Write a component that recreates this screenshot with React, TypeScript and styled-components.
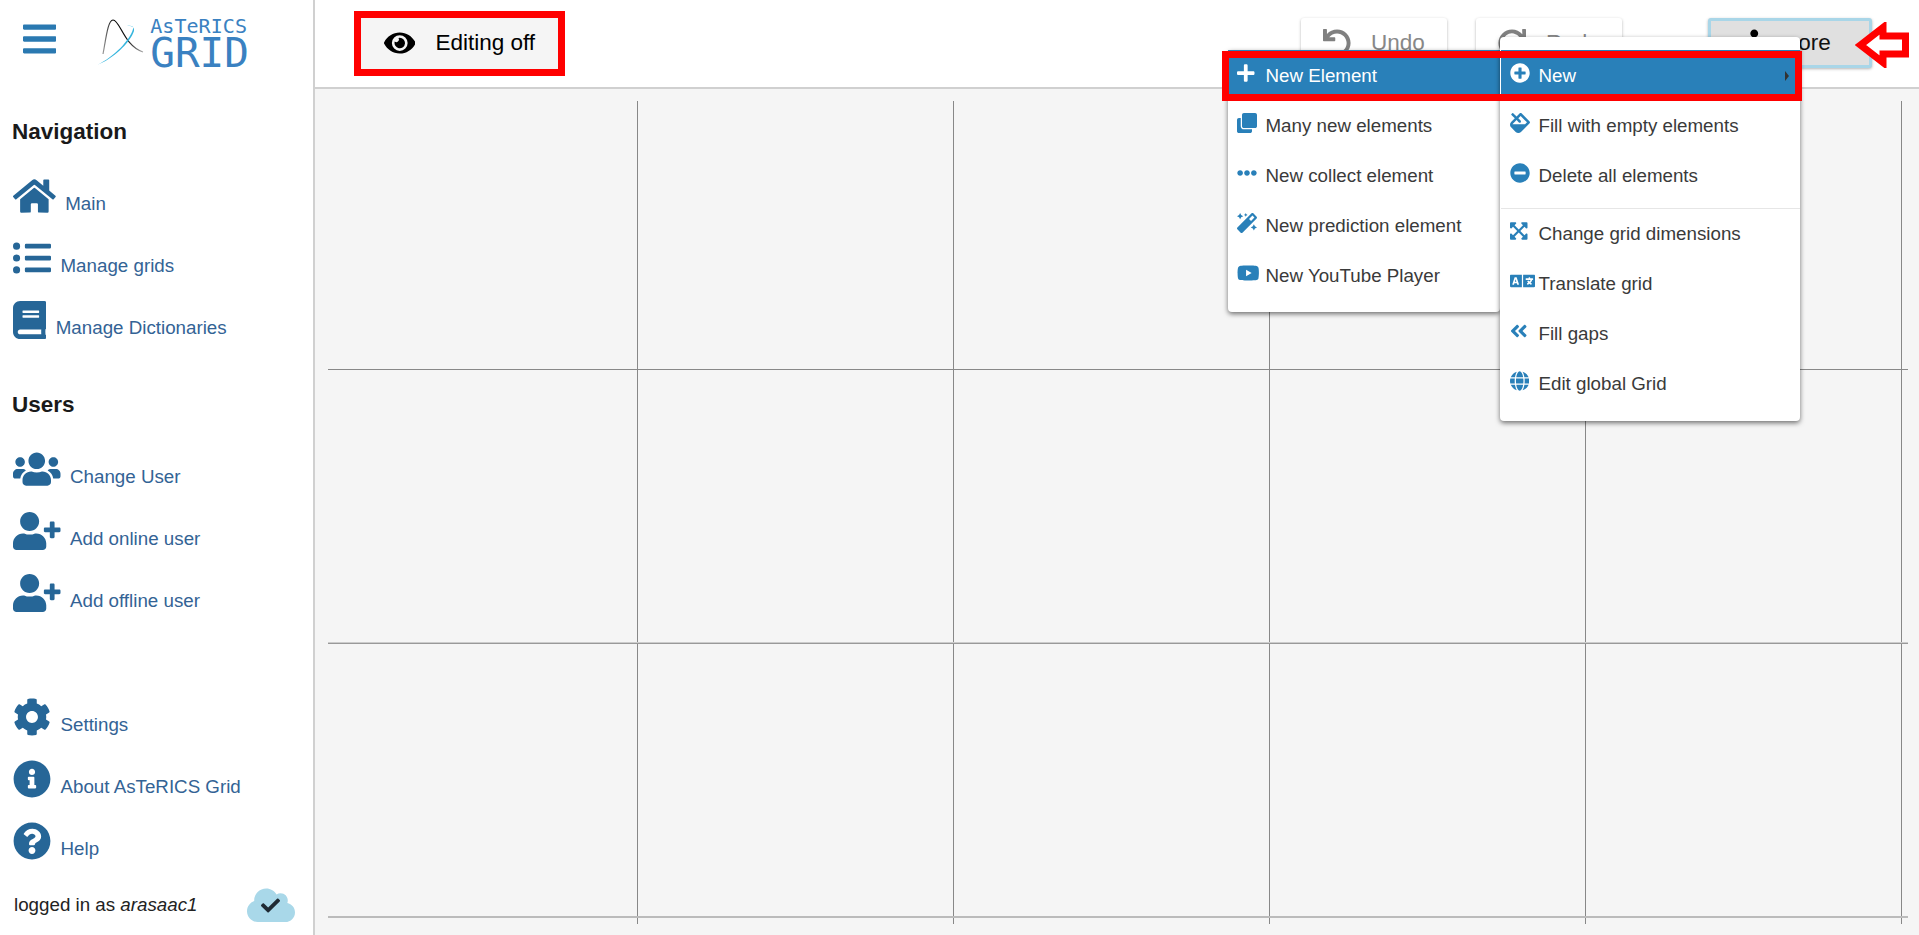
import React from 'react';
import styled, { createGlobalStyle } from 'styled-components';
import {
  FaBars, FaHome, FaListUl, FaBook, FaUsers, FaUserPlus, FaCog, FaInfoCircle, FaQuestionCircle,
  FaCloud, FaCheck, FaEye, FaUndo, FaRedo, FaEllipsisV, FaPlus, FaPlusCircle, FaClone, FaEllipsisH,
  FaMagic, FaYoutube, FaFill, FaMinusCircle, FaExpandArrowsAlt, FaLanguage, FaAngleDoubleLeft, FaGlobe,
} from 'react-icons/fa';

const Global = createGlobalStyle`
  html, body { margin: 0; padding: 0; height: 100%; overflow: hidden; background: #fff; }
  body { font-family: "Liberation Sans", Arial, sans-serif; }
  * { box-sizing: border-box; }
`;

const Page = styled.div`
  display: flex;
  width: 1919px;
  height: 935px;
  position: relative;
  overflow: hidden;
`;

/* An icon of the given height, at the width its Font Awesome artboard asks for. */
const Glyph = styled.span<{ $h: number; $r?: number }>`
  display: block;
  flex: none;
  height: ${(p) => p.$h}px;
  width: ${(p) => p.$h * (p.$r ?? 1)}px;
  svg { display: block; width: 100%; height: 100%; }
`;

const Sidebar = styled.aside`
  width: 315px;
  flex: none;
  display: flex;
  flex-direction: column;
  border-right: 2px solid #d0d0d0;
  background: #fff;
`;

const Brand = styled.div`
  height: 88px;
  display: flex;
  align-items: flex-start;
  padding: 18px 0 0 23px;
  flex: none;
`;

const Burger = styled.div`
  margin: 2px 41px 0 0;
  color: #2a79b1;
`;

const LogoMark = styled.svg`
  width: 50px;
  height: 48px;
  flex: none;
  margin-right: 3px;
`;

const LogoWords = styled.div`
  font-family: "DejaVu Sans Mono", monospace;
  color: #3a81c1;
  display: flex;
  flex-direction: column;
  margin-top: -2.5px;
`;

const LogoTop = styled.span`
  font-size: 20px;
  line-height: 21px;
  letter-spacing: 0.05px;
`;

const LogoBottom = styled.span`
  font-size: 41px;
  line-height: 33px;
`;

const SectionTitle = styled.h2<{ $top: number }>`
  margin: ${(p) => p.$top}px 0 32px 12px;
  font-size: 22.5px;
  line-height: 26px;
  font-weight: 700;
  color: #1a1a1a;
`;

const NavList = styled.nav`
  display: flex;
  flex-direction: column;
  gap: 24.2px;
  padding-left: 13px;
`;

const NavItem = styled.a`
  display: flex;
  align-items: flex-end;
  height: 38px;
  gap: 9.5px;
  color: #336395;
  font-size: 18.75px;
  line-height: 23px;
  svg { color: #266697; }
`;

const BottomNav = styled(NavList)`
  margin-top: auto;
`;

const Footer = styled.div`
  display: flex;
  align-items: center;
  justify-content: space-between;
  padding: 0 18px 8px 14px;
  margin-top: 23px;
  height: 52px;
  font-size: 18.75px;
  color: #222;
  em { font-style: italic; }
`;

const CloudBadge = styled.div`
  position: relative;
  color: #a9d8e9;
`;

const CloudCheck = styled.span`
  position: absolute;
  left: 14px;
  top: 10px;
  color: #1f2a33;
`;

const Main = styled.main`
  flex: 1;
  display: flex;
  flex-direction: column;
  min-width: 0;
`;

const Header = styled.header`
  height: 89px;
  flex: none;
  display: flex;
  align-items: center;
  border-bottom: 2px solid #d0d0d0;
  padding: 0 47px 1px 46px;
  background: #fff;
`;

const ToolButton = styled.button<{ $w: number; $gapLeft: string }>`
  width: ${(p) => p.$w}px;
  height: 50px;
  margin-left: ${(p) => p.$gapLeft};
  display: flex;
  align-items: center;
  justify-content: center;
  gap: 20px;
  border: none;
  border-radius: 3px;
  background: #fff;
  color: #888;
  font-family: inherit;
  font-size: 22.5px;
  padding: 0;
  box-shadow: 0 1px 3px rgba(0, 0, 0, 0.3);
  svg { color: #808080; }
`;

const EditButton = styled(ToolButton)`
  height: 51px;
  background: #f5f5f5;
  color: #000;
  box-shadow: none;
  border-radius: 0;
  outline: 7px solid #f00;
  svg { color: #000; }
`;

const MoreButton = styled(ToolButton)`
  background: #e0e0e0;
  color: #111;
  border: 3px solid #a9d6e8;
  svg { color: #000; }
`;

/* The open menu hides this letter in the picture; its top must not peek out above the menu. */
const CoveredLetter = styled.span`
  color: transparent;
`;

const Canvas = styled.div`
  flex: 1;
  background: #f5f5f5;
  padding: 12px 0 0 13px;
`;

const GridLines = styled.div`
  width: 1580px;
  height: 823px;
  background-image:
    linear-gradient(#ccc, #ccc),
    linear-gradient(#999, #999),
    linear-gradient(#bbb, #bbb),
    linear-gradient(#888, #888),
    linear-gradient(90deg, transparent 315px, #888 315px);
  background-size: 100% 1px, 100% 1px, 100% 2px, 100% 1px, 316px 100%;
  background-position: 0 541px, 0 542px, 0 815px, 0 268px, 310px 0;
  background-repeat: no-repeat, no-repeat, no-repeat, no-repeat, repeat-x;
`;

const Menu = styled.ul<{ $left: number; $top: number; $w: number; $pad: string }>`
  position: absolute;
  left: ${(p) => p.$left}px;
  top: ${(p) => p.$top}px;
  width: ${(p) => p.$w}px;
  padding: ${(p) => p.$pad};
  margin: 0;
  list-style: none;
  background: #fff;
  border-radius: 4px;
  box-shadow: 0 2px 5px rgba(0, 0, 0, 0.55);
`;

const MenuItem = styled.li<{ $active?: boolean; $pad: number }>`
  position: relative;
  height: 50px;
  display: flex;
  align-items: center;
  padding: 2px 0 0 ${(p) => p.$pad}px;
  font-size: 18.75px;
  color: ${(p) => (p.$active ? '#fff' : '#3a3a3a')};
  background: ${(p) => (p.$active ? '#2980b9' : 'transparent')};
  svg { color: ${(p) => (p.$active ? '#fff' : '#2980b9')}; }
`;

const MenuIcon = styled.span`
  width: 28.5px;
  flex: none;
  margin-top: -6px;
`;

const SubArrow = styled.span`
  position: absolute;
  right: 11px;
  top: 21px;
  width: 0;
  height: 0;
  border-left: 4px solid #333;
  border-top: 5px solid transparent;
  border-bottom: 5px solid transparent;
`;

const Separator = styled.li`
  height: 1px;
  margin-top: 8px;
  margin-bottom: -1px;
  background: #e6e6e6;
`;

const RedFrame = styled.div`
  position: absolute;
  left: 1222px;
  top: 51px;
  width: 580px;
  height: 50px;
  border: 7px solid #f00;
`;

const RedArrow = styled.svg`
  position: absolute;
  left: 1855px;
  top: 22px;
  width: 54px;
  height: 46px;
`;

const Logo = () => (
  <LogoMark viewBox="0 0 50 48">
    <defs>
      <linearGradient id="lg" x1="0" y1="0" x2="1" y2="0">
        <stop offset="0" stopColor="#999" />
        <stop offset="0.25" stopColor="#000" />
        <stop offset="0.6" stopColor="#111" />
        <stop offset="1" stopColor="#aaa" />
      </linearGradient>
    </defs>
    <path d="M6 36C9 20 11 2 16 2C23 2 27 28 46 34" fill="none" stroke="url(#lg)" strokeWidth="1.2" />
    <path d="M0 47C17 39 33 22 36 11C37 8 34 7 30 8C35 7.5 37.5 9 37 13C33 25 16 41 0 47Z" fill="#35b5dd" />
  </LogoMark>
);

type Entry = { icon: React.ReactNode; r?: number; label: string; active?: boolean; sub?: boolean };

const leftItems: Entry[] = [
  { icon: <FaPlus />, r: 0.875, label: 'New Element', active: true },
  { icon: <FaClone />, label: 'Many new elements' },
  { icon: <FaEllipsisH />, label: 'New collect element' },
  { icon: <FaMagic />, label: 'New prediction element' },
  { icon: <FaYoutube />, r: 1.125, label: 'New YouTube Player' },
];

const rightTop: Entry[] = [
  { icon: <FaPlusCircle />, label: 'New', active: true, sub: true },
  { icon: <FaFill />, label: 'Fill with empty elements' },
  { icon: <FaMinusCircle />, label: 'Delete all elements' },
];

const rightBottom: Entry[] = [
  { icon: <FaExpandArrowsAlt />, r: 0.875, label: 'Change grid dimensions' },
  { icon: <FaLanguage />, r: 1.25, label: 'Translate grid' },
  { icon: <FaAngleDoubleLeft />, r: 0.875, label: 'Fill gaps' },
  { icon: <FaGlobe />, r: 0.969, label: 'Edit global Grid' },
];

const renderItems = (items: Entry[], pad: number) =>
  items.map((i) => (
    <MenuItem key={i.label} $active={i.active} $pad={pad}>
      <MenuIcon><Glyph $h={20} $r={i.r}>{i.icon}</Glyph></MenuIcon>
      {i.label}
      {i.sub && <SubArrow />}
    </MenuItem>
  ));

export default function App() {
  return (
    <Page>
      <Global />
      <Sidebar>
        <Brand>
          <Burger><Glyph $h={38} $r={0.875}><FaBars /></Glyph></Burger>
          <Logo />
          <LogoWords>
            <LogoTop>AsTeRICS</LogoTop>
            <LogoBottom>GRID</LogoBottom>
          </LogoWords>
        </Brand>
        <SectionTitle $top={31}>Navigation</SectionTitle>
        <NavList>
          <NavItem><Glyph $h={38} $r={1.125}><FaHome /></Glyph>Main</NavItem>
          <NavItem><Glyph $h={38}><FaListUl /></Glyph>Manage grids</NavItem>
          <NavItem><Glyph $h={38} $r={0.875}><FaBook /></Glyph>Manage Dictionaries</NavItem>
        </NavList>
        <SectionTitle $top={52.6}>Users</SectionTitle>
        <NavList>
          <NavItem><Glyph $h={38} $r={1.25}><FaUsers /></Glyph>Change User</NavItem>
          <NavItem><Glyph $h={38} $r={1.25}><FaUserPlus /></Glyph>Add online user</NavItem>
          <NavItem><Glyph $h={38} $r={1.25}><FaUserPlus /></Glyph>Add offline user</NavItem>
        </NavList>
        <BottomNav>
          <NavItem><Glyph $h={38}><FaCog /></Glyph>Settings</NavItem>
          <NavItem><Glyph $h={38}><FaInfoCircle /></Glyph>About AsTeRICS Grid</NavItem>
          <NavItem><Glyph $h={38}><FaQuestionCircle /></Glyph>Help</NavItem>
        </BottomNav>
        <Footer>
          <span>logged in as <em>arasaac1</em></span>
          <CloudBadge>
            <Glyph $h={38.4} $r={1.25}><FaCloud /></Glyph>
            <CloudCheck><Glyph $h={19}><FaCheck /></Glyph></CloudCheck>
          </CloudBadge>
        </Footer>
      </Sidebar>
      <Main>
        <Header>
          <EditButton $w={197} $gapLeft="0"><Glyph $h={28} $r={1.125}><FaEye /></Glyph>Editing off</EditButton>
          <ToolButton $w={146} $gapLeft="auto"><Glyph $h={28}><FaUndo /></Glyph>Undo</ToolButton>
          <ToolButton $w={146} $gapLeft="29px"><Glyph $h={28}><FaRedo /></Glyph>Redo</ToolButton>
          <MoreButton $w={164} $gapLeft="86px"><Glyph $h={28} $r={0.375}><FaEllipsisV /></Glyph><span><CoveredLetter>M</CoveredLetter>ore</span></MoreButton>
        </Header>
        <Canvas>
          <GridLines />
        </Canvas>
      </Main>
      <Menu $left={1228} $top={50} $w={272} $pad="0 0 12px">
        {renderItems(leftItems, 9)}
      </Menu>
      <Menu $left={1500} $top={37} $w={300} $pad="13px 0 13px 1px">
        {renderItems(rightTop, 9)}
        <Separator />
        {renderItems(rightBottom, 9)}
      </Menu>
      <RedFrame />
      <RedArrow viewBox="0 0 54 46">
        <polygon points="5.5,23 28,5.5 28,14 50.5,14 50.5,32 28,32 28,40.5" fill="#fff" stroke="#f00" strokeWidth="7" />
      </RedArrow>
    </Page>
  );
}
